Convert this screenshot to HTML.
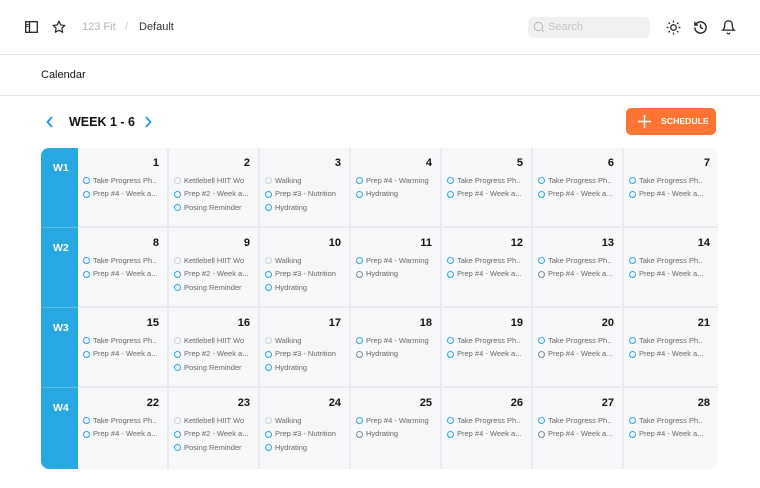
<!DOCTYPE html><html><head><meta charset="utf-8"><style>
*{margin:0;padding:0;box-sizing:border-box}
body{width:760px;height:488px;background:#fff;font-family:"Liberation Sans",sans-serif;position:relative;overflow:hidden;color:#111}
.abs{position:absolute}
.hr{position:absolute;left:0;width:760px;height:1px;background:#e4e4e4}
.grid{position:absolute;left:41px;top:148px;width:677px;height:321px;border-radius:8px;overflow:hidden;background:#f7f8fa;display:grid;grid-template-columns:37px repeat(6,91px) 94px;grid-template-rows:80px 80px 80px 81px}
.w{background:#27a8e0;color:#fff;font-weight:bold;font-size:10.5px;padding:14px 0 0 12px;border-bottom:1px solid #5cc0ea}
.c{border-right:2px solid #e9ebee;border-bottom:2px solid #e9ebee;position:relative;padding:26px 0 0 5px}
.c:nth-child(8n){border-right:none}
.c:nth-last-child(-n+7){border-bottom:none}
.n{position:absolute;right:8px;top:9px;font-weight:bold;font-size:11px;color:#111}
.i{font-size:7.5px;color:#666;height:13.5px;line-height:10px;white-space:nowrap;display:flex;align-items:center}
.i:before{content:"";width:5px;height:5px;border:1.2px solid #2fa4e0;border-radius:50%;margin-right:3px;flex:none}
.g:before{border-color:#c9ced4}
.d:before{border-color:#7d8a96}
</style></head><body>
<svg class="abs" style="left:25px;top:21px" width="13" height="12" viewBox="0 0 13 12"><rect x="0.7" y="0.7" width="11.6" height="10.6" fill="none" stroke="#222" stroke-width="1.3"/><line x1="4.5" y1="1" x2="4.5" y2="11" stroke="#222" stroke-width="1.3"/><line x1="1.5" y1="3.5" x2="3.5" y2="3.5" stroke="#222"/><line x1="1.5" y1="5.5" x2="3.5" y2="5.5" stroke="#222"/></svg>
<svg class="abs" style="left:52px;top:20px" width="14" height="14" viewBox="0 0 24 24"><path d="M12 2l3 6.5 7 .8-5.2 4.8 1.5 7L12 17.5 5.7 21l1.5-7L2 9.3l7-.8z" fill="none" stroke="#222" stroke-width="2" stroke-linejoin="round"/></svg>
<div class="abs" style="left:82px;top:21px;font-size:11px;color:#b5b5b5">123 Fit</div>
<div class="abs" style="left:125px;top:21px;font-size:11px;color:#ccc">/</div>
<div class="abs" style="left:139px;top:21px;font-size:11px;color:#333">Default</div>
<div class="abs" style="left:528px;top:17px;width:122px;height:21px;background:#f1f1f1;border-radius:6px"></div>
<svg class="abs" style="left:533px;top:21px" width="12" height="12" viewBox="0 0 12 12"><circle cx="5.5" cy="5.5" r="4.2" fill="none" stroke="#bbb" stroke-width="1.1"/><line x1="8.5" y1="8.5" x2="11" y2="11" stroke="#bbb" stroke-width="1.1"/></svg>
<div class="abs" style="left:548px;top:21px;font-size:11px;color:#c2c2c2">Search</div>
<svg class="abs" style="left:666px;top:20px" width="15" height="15" viewBox="0 0 24 24" fill="none" stroke="#222" stroke-width="2"><circle cx="12" cy="12" r="4.5"/><path d="M12 1v3M12 20v3M1 12h3M20 12h3M4.2 4.2l2.1 2.1M17.7 17.7l2.1 2.1M4.2 19.8l2.1-2.1M17.7 6.3l2.1-2.1"/></svg>
<svg class="abs" style="left:693px;top:20px" width="15" height="15" viewBox="0 0 24 24" fill="none" stroke="#222" stroke-width="2.2"><path d="M3 12a9 9 0 1 0 3-6.7L3 8"/><path d="M3 3v5h5"/><path d="M12 7v5l4 2"/></svg>
<svg class="abs" style="left:721px;top:19px" width="15" height="16" viewBox="0 0 24 24" fill="none" stroke="#222" stroke-width="2"><path d="M6 8a6 6 0 0 1 12 0c0 7 3 9 3 9H3s3-2 3-9"/><path d="M10 21a2 2 0 0 0 4 0"/></svg>
<div class="hr" style="top:54px"></div>
<div class="abs" style="left:41px;top:69px;font-size:11px;color:#111">Calendar</div>
<div class="hr" style="top:95px"></div>
<svg class="abs" style="left:45px;top:115px" width="10" height="14" viewBox="0 0 10 14"><path d="M7 2L2.5 7 7 12" fill="none" stroke="#1e9ae0" stroke-width="1.8"/></svg>
<div class="abs" style="left:69px;top:115px;font-size:12.5px;font-weight:bold;color:#111">WEEK 1 - 6</div>
<svg class="abs" style="left:143px;top:115px" width="10" height="14" viewBox="0 0 10 14"><path d="M3 2l4.5 5L3 12" fill="none" stroke="#1e9ae0" stroke-width="1.8"/></svg>
<div class="abs" style="left:626px;top:108px;width:90px;height:27px;background:#ff7433;border-radius:5px"></div>
<svg class="abs" style="left:637px;top:114px" width="15" height="15" viewBox="0 0 15 15"><path d="M7.5 1v13M1 7.5h13" stroke="#fff" stroke-width="1.5"/></svg>
<div class="abs" style="left:661px;top:116px;font-size:8.7px;font-weight:bold;color:#fff">SCHEDULE</div>
<div class="grid">
<div class="w">W1</div>
<div class="c"><div class="n">1</div><div class="i">Take Progress Ph..</div><div class="i">Prep #4 - Week a...</div></div>
<div class="c"><div class="n">2</div><div class="i g">Kettlebell HIIT Wo</div><div class="i">Prep #2 - Week a...</div><div class="i">Posing Reminder</div></div>
<div class="c"><div class="n">3</div><div class="i g">Walking</div><div class="i">Prep #3 - Nutrition</div><div class="i">Hydrating</div></div>
<div class="c"><div class="n">4</div><div class="i">Prep #4 - Warming</div><div class="i">Hydrating</div></div>
<div class="c"><div class="n">5</div><div class="i">Take Progress Ph..</div><div class="i">Prep #4 - Week a...</div></div>
<div class="c"><div class="n">6</div><div class="i">Take Progress Ph..</div><div class="i">Prep #4 - Week a...</div></div>
<div class="c"><div class="n">7</div><div class="i">Take Progress Ph..</div><div class="i">Prep #4 - Week a...</div></div>
<div class="w">W2</div>
<div class="c"><div class="n">8</div><div class="i">Take Progress Ph..</div><div class="i">Prep #4 - Week a...</div></div>
<div class="c"><div class="n">9</div><div class="i g">Kettlebell HIIT Wo</div><div class="i">Prep #2 - Week a...</div><div class="i">Posing Reminder</div></div>
<div class="c"><div class="n">10</div><div class="i g">Walking</div><div class="i">Prep #3 - Nutrition</div><div class="i">Hydrating</div></div>
<div class="c"><div class="n">11</div><div class="i">Prep #4 - Warming</div><div class="i d">Hydrating</div></div>
<div class="c"><div class="n">12</div><div class="i">Take Progress Ph..</div><div class="i">Prep #4 - Week a...</div></div>
<div class="c"><div class="n">13</div><div class="i">Take Progress Ph..</div><div class="i d">Prep #4 - Week a...</div></div>
<div class="c"><div class="n">14</div><div class="i">Take Progress Ph..</div><div class="i">Prep #4 - Week a...</div></div>
<div class="w">W3</div>
<div class="c"><div class="n">15</div><div class="i">Take Progress Ph..</div><div class="i">Prep #4 - Week a...</div></div>
<div class="c"><div class="n">16</div><div class="i g">Kettlebell HIIT Wo</div><div class="i">Prep #2 - Week a...</div><div class="i">Posing Reminder</div></div>
<div class="c"><div class="n">17</div><div class="i g">Walking</div><div class="i">Prep #3 - Nutrition</div><div class="i">Hydrating</div></div>
<div class="c"><div class="n">18</div><div class="i">Prep #4 - Warming</div><div class="i d">Hydrating</div></div>
<div class="c"><div class="n">19</div><div class="i">Take Progress Ph..</div><div class="i">Prep #4 - Week a...</div></div>
<div class="c"><div class="n">20</div><div class="i">Take Progress Ph..</div><div class="i d">Prep #4 - Week a...</div></div>
<div class="c"><div class="n">21</div><div class="i">Take Progress Ph..</div><div class="i">Prep #4 - Week a...</div></div>
<div class="w" style="border-bottom:none">W4</div>
<div class="c"><div class="n">22</div><div class="i">Take Progress Ph..</div><div class="i">Prep #4 - Week a...</div></div>
<div class="c"><div class="n">23</div><div class="i g">Kettlebell HIIT Wo</div><div class="i">Prep #2 - Week a...</div><div class="i">Posing Reminder</div></div>
<div class="c"><div class="n">24</div><div class="i g">Walking</div><div class="i">Prep #3 - Nutrition</div><div class="i">Hydrating</div></div>
<div class="c"><div class="n">25</div><div class="i">Prep #4 - Warming</div><div class="i d">Hydrating</div></div>
<div class="c"><div class="n">26</div><div class="i">Take Progress Ph..</div><div class="i">Prep #4 - Week a...</div></div>
<div class="c"><div class="n">27</div><div class="i">Take Progress Ph..</div><div class="i d">Prep #4 - Week a...</div></div>
<div class="c"><div class="n">28</div><div class="i">Take Progress Ph..</div><div class="i">Prep #4 - Week a...</div></div>
</div>
</body></html>
